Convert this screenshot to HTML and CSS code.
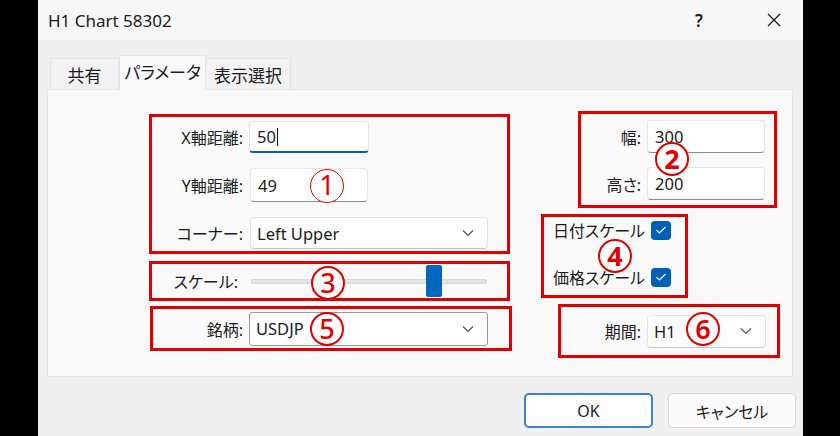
FILE: index.html
```html
<!DOCTYPE html>
<html lang="ja">
<head>
<meta charset="utf-8">
<title>H1 Chart 58302</title>
<link rel="stylesheet" href="styles.css">
</head>
<body>
<div class="dialog">
  <div class="titlebar">
    <span class="title">H1 Chart 58302</span>
    <span class="help">?</span>
    <span class="close"><svg width="16" height="16" viewBox="0 0 16 16"><path d="M2 2 L14 14 M14 2 L2 14" stroke="#1a1a1a" stroke-width="1.3" fill="none"/></svg></span>
  </div>
  <div class="tabs">
    <div class="tab">共有</div>
    <div class="tab active">パラメータ</div>
    <div class="tab tab3">表示選択</div>
  </div>
  <div class="panel">
    <div class="col-left">
      <div class="box box1">
        <div class="row r-x"><span class="lbl">X軸距離:</span><div class="input focus">50<span class="caret"></span></div></div>
        <div class="row r-y"><span class="lbl">Y軸距離:</span><div class="input iy">49</div></div>
        <div class="row r-c"><span class="lbl">コーナー:</span><div class="select sc">Left Upper<svg class="chev" width="12" height="8" viewBox="0 0 12 8"><path d="M1 1.5 L6 6.5 L11 1.5" stroke="#555" stroke-width="1.2" fill="none"/></svg></div></div>
        <span class="num n1">1</span>
      </div>
      <div class="box box3">
        <span class="lbl">スケール:</span>
        <div class="slider"><div class="track"></div><div class="thumb"></div></div>
        <span class="num n3">3</span>
      </div>
      <div class="box box5">
        <span class="lbl">銘柄:</span>
        <div class="select sym">USDJP<svg class="chev" width="12" height="8" viewBox="0 0 12 8"><path d="M1 1.5 L6 6.5 L11 1.5" stroke="#555" stroke-width="1.2" fill="none"/></svg></div>
        <span class="num n5">5</span>
      </div>
    </div>
    <div class="col-right">
      <div class="box box2">
        <div class="row r-w"><span class="lbl">幅:</span><div class="input iw">300</div></div>
        <div class="row r-h"><span class="lbl">高さ:</span><div class="input iw">200</div></div>
        <span class="num n2">2</span>
      </div>
      <div class="box box4">
        <div class="crow c1"><span>日付スケール</span><span class="check"><svg width="12" height="10" viewBox="0 0 12 10"><path d="M1.5 5.2 L4.5 8 L10.5 2" stroke="#fff" stroke-width="1.2" fill="none"/></svg></span></div>
        <div class="crow c2"><span>価格スケール</span><span class="check"><svg width="12" height="10" viewBox="0 0 12 10"><path d="M1.5 5.2 L4.5 8 L10.5 2" stroke="#fff" stroke-width="1.2" fill="none"/></svg></span></div>
        <span class="num n4">4</span>
      </div>
      <div class="box box6">
        <span class="lbl">期間:</span>
        <div class="select per">H1<svg class="chev" width="12" height="8" viewBox="0 0 12 8"><path d="M1 1.5 L6 6.5 L11 1.5" stroke="#555" stroke-width="1.2" fill="none"/></svg></div>
        <span class="num n6">6</span>
      </div>
    </div>
  </div>
  <div class="buttons">
    <div class="btn ok">OK</div>
    <div class="btn cancel">キャンセル</div>
  </div>
</div>
</body>
</html>
```
FILE: styles.css
```css
* { box-sizing: border-box; }
html, body { margin: 0; padding: 0; }
body {
  background: #000;
  width: 840px;
  height: 436px;
  overflow: hidden;
  font-family: "Noto Sans", "Noto Sans CJK JP", sans-serif;
  font-size: 16px;
  color: #1b1b1b;
  font-feature-settings: "palt";
}
.dialog {
  margin-left: 38px;
  width: 765px;
  height: 436px;
  background: #f0f0f0;
  display: flex;
  flex-direction: column;
}
.titlebar {
  height: 40px;
  background: #f7f7f7;
  display: flex;
  align-items: center;
  padding-left: 10px;
  flex-shrink: 0;
}
.title { font-size: 17px; flex: 1; }
.help { font-size: 17px; font-weight: 600; width: 16px; margin-right: 55px; }
.close { width: 16px; height: 16px; margin-right: 21px; display: flex; }
.tabs {
  display: flex;
  align-items: flex-end;
  height: 49px;
  margin-left: 12px;
  flex-shrink: 0;
}
.tab {
  height: 32px;
  width: 69px;
  display: flex;
  align-items: center;
  justify-content: center;
  background: #f2f2f2;
  border: 1px solid #e3e3e3;
  border-bottom: none;
  font-size: 17px;
  margin-bottom: -1px;
}
.tab.active {
  height: 35px;
  width: 87px;
  background: #f9f9f9;
  border-color: #e5e5e5;
  position: relative;
  z-index: 1;
  padding-bottom: 4px;
}
.tab3 { width: 85px; border-left: none; }
.panel {
  margin-left: 9px;
  width: 746px;
  height: 288px;
  background: #f9f9f9;
  border: 1px solid #e5e5e5;
  display: flex;
  flex-shrink: 0;
}
.col-left {
  margin-left: 101px;
  margin-top: 24px;
  width: 362px;
  display: flex;
  flex-direction: column;
}
.col-right {
  margin-left: 30px;
  margin-top: 21px;
  display: flex;
  flex-direction: column;
}
.box {
  border: 3px solid #e00000;
  position: relative;
}
.lbl { text-align: right; white-space: nowrap; }
.box1 {
  width: 361px;
  height: 140px;
  padding-top: 4px;
  display: flex;
  flex-direction: column;
  gap: 15px;
}
.row {
  display: grid;
  grid-template-columns: 91px auto;
  column-gap: 6px;
  align-items: center;
}
.input {
  background: #fff;
  border: 1px solid #e6e6e6;
  border-bottom: 1px solid #8a8a8a;
  border-radius: 4px;
  padding-left: 7px;
  display: flex;
  align-items: center;
  font-size: 16.5px;
}
.input.focus {
  width: 120px;
  height: 32px;
  border-bottom: 2px solid #005fb8;
}
.caret {
  display: inline-block;
  width: 1px;
  height: 18px;
  background: #111;
  margin-left: 1px;
}
.input.iy { width: 118px; height: 34px; margin-left: 1px; }
.select {
  background: #fdfdfd;
  border: 1px solid #e2e2e2;
  border-bottom-color: #c8c8c8;
  border-radius: 4px;
  padding-left: 6px;
  display: flex;
  align-items: center;
  justify-content: space-between;
  padding-right: 13px;
  font-size: 16.5px;
}
.select.sc { width: 238px; height: 32px; margin-left: 1px; }
.box3 {
  width: 361px;
  height: 40px;
  margin-top: 7px;
  display: grid;
  grid-template-columns: 86px 236px;
  column-gap: 13px;
  align-items: center;
}
.slider { position: relative; height: 34px; display: flex; align-items: center; }
.track {
  width: 236px;
  height: 5px;
  background: #e4e4e4;
  border: 1px solid #dadada;
  border-radius: 2px;
}
.thumb {
  position: absolute;
  left: 175px;
  top: 1px;
  width: 16px;
  height: 32px;
  background: #0067c0;
  border-radius: 2px;
}
.box5 {
  width: 362px;
  height: 45px;
  margin-top: 5px;
  margin-left: 1px;
  display: grid;
  grid-template-columns: 90px 239px;
  column-gap: 6px;
  align-items: center;
}
.select.sym {
  height: 34px;
  border: 1px solid #9a9a9a;
  border-radius: 3px;
}
.box2 {
  margin-left: 37px;
  width: 199px;
  height: 97px;
  padding-top: 6px;
  display: flex;
  flex-direction: column;
  gap: 14px;
}
.box2 .row { grid-template-columns: 60px auto; }
.input.iw { width: 118px; height: 33px; }
.box4 {
  margin-top: 6px;
  width: 147px;
  height: 84px;
  padding-top: 4px;
  padding-right: 14px;
  display: flex;
  flex-direction: column;
  align-items: flex-end;
  gap: 29px;
}
.crow {
  display: flex;
  align-items: center;
  gap: 6px;
  height: 18px;
  font-size: 16px;
}
.check {
  width: 20px;
  height: 19px;
  background: #005fb8;
  border-radius: 4px;
  display: flex;
  align-items: center;
  justify-content: center;
}
.box6 {
  margin-top: 6px;
  margin-left: 17px;
  width: 222px;
  height: 54px;
  display: grid;
  grid-template-columns: 80px 119px;
  column-gap: 6px;
  align-items: center;
}
.select.per { height: 33px; }
.num {
  position: absolute;
  width: 34px;
  height: 34px;
  border-radius: 50%;
  border: 2px solid #e00000;
  background: #fff;
  color: #e00000;
  font-family: "Noto Sans", sans-serif;
  font-size: 27px;
  font-weight: 500;
  line-height: 30px;
  text-align: center;
}
.n1 { left: 158px; top: 52px; border-width: 1.5px; font-weight: 400; }
.n2 { left: 74px; top: 28px; border-width: 2.5px; font-weight: 700; }
.n3 { left: 159px; top: 2px; }
.n4 { left: 54px; top: 22px; border-width: 2.5px; font-weight: 700; }
.n5 { left: 157px; top: 3px; }
.n6 { left: 125px; top: 5px; font-weight: 600; }
.buttons {
  margin-top: 16px;
  margin-left: 486px;
  display: flex;
  gap: 15px;
}
.btn {
  height: 35px;
  display: flex;
  align-items: center;
  justify-content: center;
  border-radius: 5px;
  font-size: 16px;
}
.btn.ok {
  width: 129px;
  background: #fdfdfd;
  border: 2px solid #3b82d0;
}
.btn.cancel {
  width: 128px;
  background: #fbfbfb;
  border: 1px solid #d6d6d6;
}
```
